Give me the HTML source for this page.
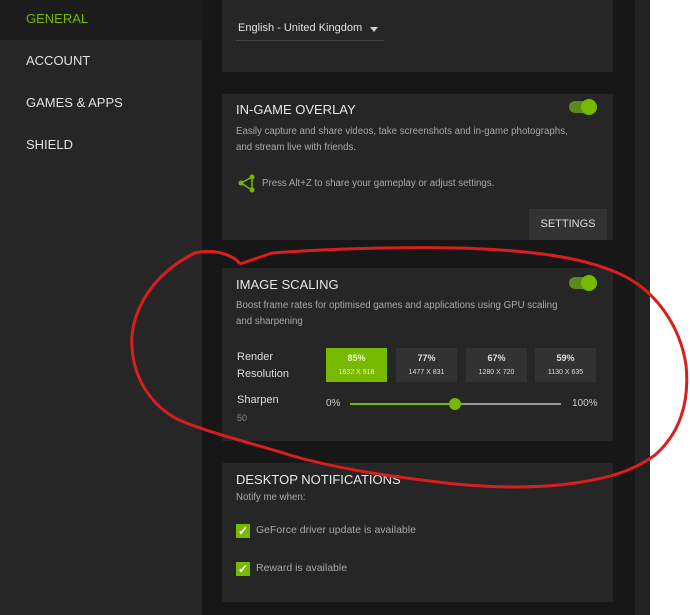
<!DOCTYPE html>
<html><head><meta charset="utf-8"><style>
*{margin:0;padding:0;box-sizing:border-box}
body{width:690px;height:615px;overflow:hidden;background:#fff;font-family:"Liberation Sans",sans-serif;position:relative}
.side{position:absolute;left:0;top:0;width:202px;height:615px;background:#262626}
.side .sel{position:absolute;left:0;top:0;width:202px;height:40px;background:#1c1c1c}
.nav{position:absolute;left:26px;font-size:13px;color:#e0e0e0}
.main{position:absolute;left:202px;top:0;width:448px;height:615px;background:#171717}
.strip{position:absolute;left:635px;top:0;width:15px;height:615px;background:#222}
.card{position:absolute;left:222px;width:391px;background:#262626}
.h{position:absolute;left:14px;font-size:13px;color:#e8e8e8}
.t{position:absolute;left:14px;font-size:9.7px;color:#a8a8a8;line-height:16px}
.tog{position:absolute;width:26px;height:12px;border-radius:6px;background:#5a8a1a}
.tog::after{content:"";position:absolute;right:-2px;top:-2px;width:16px;height:16px;border-radius:50%;background:#76b900}
.btn{position:absolute;top:80px;height:34px;background:#323232;color:#ddd;text-align:center}
.btn b{display:block;font-size:9px;margin-top:5px;font-weight:bold}
.btn i{display:block;font-size:7px;font-style:normal;margin-top:6px}
.cb{position:absolute;left:14px;width:14px;height:14px;background:#76b900;color:#fff;font-size:12px;line-height:14px;text-align:center;font-weight:bold}
</style></head><body>
<div class="side"><div class="sel"></div>
<div class="nav" style="top:11px;color:#76b900">GENERAL</div>
<div class="nav" style="top:53px">ACCOUNT</div>
<div class="nav" style="top:95px">GAMES &amp; APPS</div>
<div class="nav" style="top:137px">SHIELD</div></div>
<div class="main"></div><div class="strip"></div>
<div class="card" style="top:0;height:72px">
<div style="position:absolute;left:16px;top:22px;font-size:11px;color:#e0e0e0">English - United Kingdom</div>
<div style="position:absolute;left:148px;top:27px;border:4px solid transparent;border-top:5px solid #ccc"></div>
<div style="position:absolute;left:14px;top:40px;width:148px;height:1px;background:#444"></div></div>
<div class="card" style="top:94px;height:146px">
<div class="h" style="top:8px">IN-GAME OVERLAY</div><div class="tog" style="left:347px;top:7px"></div>
<div class="t" style="top:30px">Easily capture and share videos, take screenshots and in-game photographs,<br>and stream live with friends.</div>
<svg style="position:absolute;left:15px;top:80px" width="20" height="20" viewBox="0 0 20 20"><path d="M15 3 L4 9 L15 16 Z" fill="none" stroke="#76b900" stroke-width="1.5"/><circle cx="15" cy="3" r="2.5" fill="#76b900"/><circle cx="4" cy="9" r="2.5" fill="#76b900"/><circle cx="15" cy="16" r="2.5" fill="#76b900"/></svg>
<div class="t" style="left:40px;top:82px">Press Alt+Z to share your gameplay or adjust settings.</div>
<div style="position:absolute;left:307px;top:115px;width:78px;height:31px;background:#333;color:#ddd;font-size:11px;text-align:center;line-height:31px">SETTINGS</div></div>
<div class="card" style="top:268px;height:173px">
<div class="h" style="top:9px">IMAGE SCALING</div><div class="tog" style="left:347px;top:9px"></div>
<div class="t" style="top:30px">Boost frame rates for optimised games and applications using GPU scaling<br>and sharpening</div>
<div style="position:absolute;left:15px;top:81px;font-size:11px;color:#ddd;line-height:17px">Render<br>Resolution</div>
<div class="btn" style="left:104px;width:61px;background:#76b900;color:#e8f5c8"><b>85%</b><i>1632 X 918</i></div>
<div class="btn" style="left:174px;width:61px"><b>77%</b><i>1477 X 831</i></div>
<div class="btn" style="left:244px;width:61px"><b>67%</b><i>1280 X 720</i></div>
<div class="btn" style="left:313px;width:61px"><b>59%</b><i>1130 X 635</i></div>
<div style="position:absolute;left:15px;top:126px;font-size:11px;color:#ddd">Sharpen</div>
<div style="position:absolute;left:15px;top:145px;font-size:9px;color:#888">50</div>
<div style="position:absolute;left:104px;top:130px;font-size:10px;color:#ccc">0%</div>
<div style="position:absolute;left:350px;top:130px;font-size:10px;color:#ccc">100%</div>
<div style="position:absolute;left:128px;top:135px;width:105px;height:2px;background:#76b900"></div>
<div style="position:absolute;left:233px;top:135px;width:106px;height:2px;background:#999"></div>
<div style="position:absolute;left:227px;top:130px;width:12px;height:12px;border-radius:50%;background:#76b900"></div></div>
<div class="card" style="top:463px;height:139px">
<div class="h" style="top:9px">DESKTOP NOTIFICATIONS</div>
<div class="t" style="top:27px">Notify me when:</div>
<div class="cb" style="top:61px">✓</div><div class="t" style="left:34px;top:59px;font-size:10.5px">GeForce driver update is available</div>
<div class="cb" style="top:99px">✓</div><div class="t" style="left:34px;top:97px;font-size:10.5px">Reward is available</div></div>
<svg style="position:absolute;left:0;top:0" width="690" height="615"><path d="M240 264 L272 253 C340 248 430 246 484 249 C540 252 585 258 620 274 C655 290 680 325 686 365 C690 405 678 435 655 455 C635 470 610 478 575 483 C535 489 480 488 430 481 C370 474 320 465 280 452 C240 440 200 430 175 418 C145 400 130 370 132 335 C136 300 160 270 195 253 C215 248 235 256 240 264" fill="none" stroke="#d81e1e" stroke-width="3"/></svg>
</body></html>
